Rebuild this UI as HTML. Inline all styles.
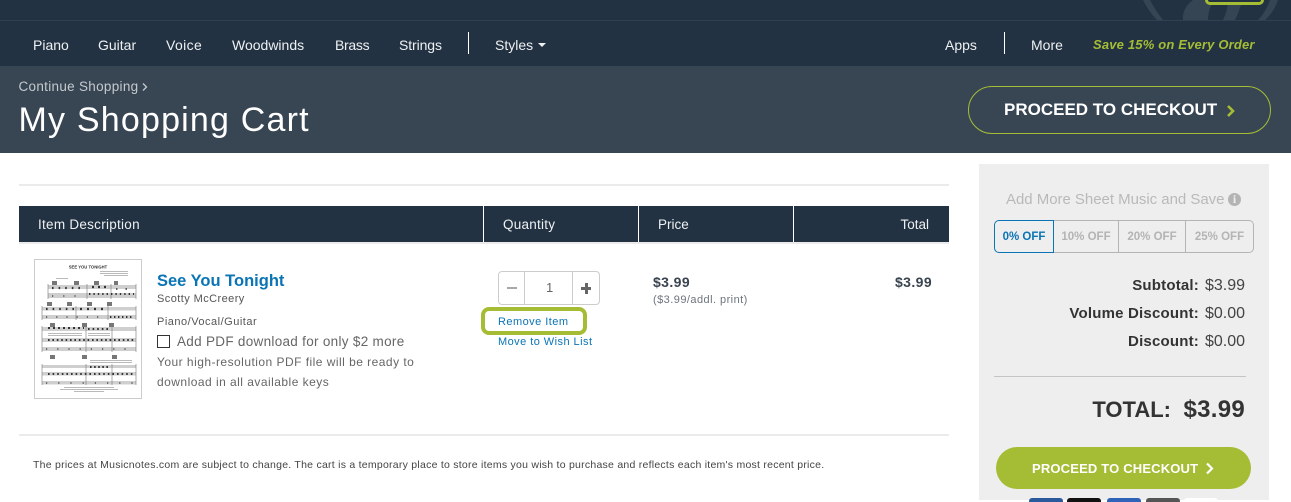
<!DOCTYPE html>
<html><head><meta charset="utf-8"><title>My Shopping Cart</title>
<style>
html,body{margin:0;padding:0;background:#fff}
body{position:relative;width:1291px;height:500px;overflow:hidden;font-family:"Liberation Sans",sans-serif;color:#333}
.a{position:absolute}
.t{position:absolute;white-space:nowrap;line-height:20px}
.n{font-size:14px;top:34.5px;color:#eef0f2}
.h{color:#eef0f2;font-size:13.5px;top:215px}
.b{font-weight:bold;color:#333;font-size:15px;letter-spacing:.2px}
.v{font-size:16px;color:#444}
.l{color:#0b74b5}
.off{position:absolute;top:220px;height:33px;line-height:33px;text-align:center;font-size:11.5px;font-weight:bold;color:#b4b4b4;box-sizing:border-box}
</style></head><body>
<div class="a" style="left:0;top:0;width:1291px;height:66px;background:#223242"></div>
<div class="a" style="left:0;top:20px;width:1291px;height:1px;background:#2f4052"></div>
<svg class="a" style="left:1120px;top:0" width="171" height="20" viewBox="0 0 171 20">
<path d="M23 0 Q29 12 37 20 L43 20 Q35 10 30 0Z" fill="#364553"/>
<path d="M73 0 Q62 8 63 20 L88 20 Q88 8 95 0Z" fill="#364553"/>
<path d="M108 0 Q108 10 103 20 L115 20 Q120 10 122 0Z" fill="#364553"/>
<path d="M150 0 Q146 12 138 20 L145 20 Q154 12 158 0Z" fill="#364553"/>
</svg>
<div class="a" style="left:1205px;top:-9px;width:53px;height:8px;border:3px solid #a5bd35;border-radius:5px;background:#223242"></div>
<span class="t n" style="left:33px">Piano</span>
<span class="t n" style="left:98px">Guitar</span>
<span class="t n" style="left:166px;letter-spacing:.4px">Voice</span>
<span class="t n" style="left:232px">Woodwinds</span>
<span class="t n" style="left:335px;letter-spacing:-.3px">Brass</span>
<span class="t n" style="left:399px;letter-spacing:-.1px">Strings</span>
<div class="a" style="left:468px;top:32px;width:1px;height:22px;background:#fff"></div>
<span class="t n" style="left:495px">Styles</span>
<div class="a" style="left:538px;top:43px;border-left:4px solid transparent;border-right:4px solid transparent;border-top:4px solid #eef0f2"></div>
<span class="t n" style="left:945px">Apps</span>
<div class="a" style="left:1004px;top:32px;width:1px;height:22px;background:#fff"></div>
<span class="t n" style="left:1031px">More</span>
<span class="t" style="left:1093px;top:34.5px;font-size:13px;font-weight:bold;font-style:italic;color:#a5bd35;letter-spacing:.18px">Save 15% on Every Order</span>

<div class="a" style="left:0;top:66px;width:1291px;height:87px;background:#384654"></div>
<span class="t" style="left:18.5px;top:77px;font-size:13.5px;color:#c4c9ce;letter-spacing:.3px">Continue Shopping</span>
<svg class="a" style="left:141px;top:82px" width="8" height="10"><path d="M2 1.5 L5.5 5 L2 8.5" fill="none" stroke="#c4c9ce" stroke-width="1.3"/></svg>
<span class="t" style="left:18.5px;top:110px;font-size:34px;color:#fff;letter-spacing:1.2px">My Shopping Cart</span>
<div class="a" style="left:968px;top:86px;width:301px;height:46px;border:1px solid #a5bd35;border-radius:24px"></div>
<span class="t" style="left:1004px;top:100px;font-size:17px;font-weight:bold;color:#fff">PROCEED TO CHECKOUT</span>
<svg class="a" style="left:1226px;top:104px" width="10" height="14"><path d="M2 2 L7 7 L2 12" fill="none" stroke="#a5bd35" stroke-width="2.6"/></svg>

<div class="a" style="left:19px;top:184px;width:930px;height:2px;background:#ebebeb"></div>
<div class="a" style="left:19px;top:206px;width:930px;height:36px;background:#223242"></div>
<div class="a" style="left:19px;top:242px;width:930px;height:2px;background:#ebebeb"></div>
<div class="a" style="left:483px;top:206px;width:1px;height:36px;background:#fff"></div>
<div class="a" style="left:638px;top:206px;width:1px;height:36px;background:#fff"></div>
<div class="a" style="left:793px;top:206px;width:1px;height:36px;background:#fff"></div>
<span class="t h" style="left:38px;letter-spacing:.27px">Item Description</span>
<span class="t h" style="left:503px;letter-spacing:.25px">Quantity</span>
<span class="t h" style="left:658px">Price</span>
<span class="t h" style="right:362px">Total</span>

<svg class="a" style="left:34px;top:259px" width="108" height="140" viewBox="0 0 108 140">
<rect x=".5" y=".5" width="107" height="139" fill="#fff" stroke="#ccc"/>
<text x="54" y="9.5" font-size="4.2" font-weight="bold" text-anchor="middle" fill="#333" font-family="Liberation Sans">SEE YOU TONIGHT</text>
<g fill="#aaa"><rect x="66" y="12" width="28" height=".8"/><rect x="66" y="14" width="28" height=".8"/><rect x="70" y="16" width="24" height=".8"/><rect x="22" y="19" width="12" height=".8"/></g>
<g fill="#cfcfcf">
<rect x="14" y="26" width="88" height="4"/><rect x="14" y="34" width="88" height="5"/>
<rect x="8" y="48" width="94" height="3.5"/><rect x="8" y="56" width="94" height="4"/>
<rect x="8" y="68" width="94" height="4"/><rect x="8" y="79" width="94" height="4"/><rect x="8" y="88" width="94" height="4"/>
<rect x="8" y="106" width="94" height="3"/><rect x="8" y="113" width="94" height="3.5"/><rect x="8" y="122" width="94" height="3.5"/>
</g>
<g stroke="#777" stroke-width=".6" fill="none">
<path d="M14 25V40M102 25V40M8 47V61M102 47V61M8 67V93M102 67V93M8 105V126M102 105V126"/>
<path d="M53 25V40M77 25V40M42 47V61M74 47V61M52 67V93M78 67V93M52 105V126M78 105V126"/>
</g>
<g fill="none" stroke="#333">
<path d="M18 29H50" stroke-width="2.2" stroke-dasharray="1.6 5"/>
<path d="M58 28H76" stroke-width="2.2" stroke-dasharray="2 4"/>
<path d="M82 30H100" stroke-width="1.5" stroke-dasharray="1.5 8"/>
<path d="M55 35H100" stroke-width="2" stroke-dasharray="1.4 3"/>
<path d="M18 37H50" stroke-width="1.2" stroke-dasharray="1.2 10"/>
<path d="M12 50H40" stroke-width="2.2" stroke-dasharray="1.6 5"/>
<path d="M46 50H72" stroke-width="2.2" stroke-dasharray="2 5"/>
<path d="M76 58H100" stroke-width="2" stroke-dasharray="1.4 2.6"/>
<path d="M12 58H72" stroke-width="1.2" stroke-dasharray="1.2 9"/>
<path d="M14 69H50" stroke-width="2" stroke-dasharray="2 3"/>
<path d="M54 70H76" stroke-width="2" stroke-dasharray="1.6 3"/>
<path d="M14 81H100" stroke-width="2" stroke-dasharray="1.6 2.8"/>
<path d="M12 90H100" stroke-width="1.2" stroke-dasharray="1.2 10"/>
<path d="M56 108H76" stroke-width="2" stroke-dasharray="1.6 2.5"/>
<path d="M14 115H100" stroke-width="2" stroke-dasharray="1.6 3"/>
<path d="M12 124H100" stroke-width="1.2" stroke-dasharray="1.2 11"/>
</g>
<path d="M18 22h5v4h-5zM40 22h5v4h-5zM60 22h5v4h-5zM80 22h4v4h-4zM13 43h5v4h-5zM33 43h5v4h-5zM53 43h5v4h-5zM73 43h5v4h-5zM16 64h5v4h-5zM48 64h5v4h-5zM75 64h5v4h-5zM16 96h5v4h-5zM48 96h5v4h-5zM78 96h5v4h-5z" fill="#777"/>
<g fill="#aaa"><rect x="14" y="74" width="34" height=".8"/><rect x="14" y="76" width="34" height=".8"/><rect x="54" y="74" width="22" height=".8"/><rect x="54" y="76" width="22" height=".8"/><rect x="56" y="101" width="42" height=".8"/><rect x="56" y="103" width="42" height=".8"/><rect x="30" y="128" width="50" height=".8"/><rect x="26" y="130" width="58" height=".8"/><rect x="40" y="132" width="30" height=".8"/></g>
</svg>

<span class="t" style="left:157px;top:271px;font-size:16.5px;font-weight:bold;color:#0b74b5">See You Tonight</span>
<span class="t" style="left:157px;top:288.5px;font-size:11px;color:#555;letter-spacing:.43px">Scotty McCreery</span>
<span class="t" style="left:157px;top:311.5px;font-size:11px;color:#555;letter-spacing:.5px">Piano/Vocal/Guitar</span>
<div class="a" style="left:157px;top:335px;width:11px;height:11px;border:1px solid #333;background:#fff"></div>
<span class="t" style="left:177px;top:332px;font-size:13.5px;color:#666;letter-spacing:.3px">Add PDF download for only $2 more</span>
<span class="t" style="left:157px;top:352px;font-size:12px;color:#666;letter-spacing:.47px">Your high-resolution PDF file will be ready to</span>
<span class="t" style="left:157px;top:372px;font-size:12px;color:#666;letter-spacing:.47px">download in all available keys</span>

<div class="a" style="left:498px;top:271px;width:100px;height:32px;border:1px solid #ccc;border-radius:4px;background:#fff"></div>
<div class="a" style="left:524px;top:272px;width:1px;height:32px;background:#ccc"></div>
<div class="a" style="left:572px;top:272px;width:1px;height:32px;background:#ccc"></div>
<div class="a" style="left:507px;top:287px;width:10px;height:2px;background:#a8a8a8"></div>
<div class="a" style="left:581px;top:287px;width:10px;height:3px;background:#666"></div>
<div class="a" style="left:585px;top:283px;width:3px;height:11px;background:#666"></div>
<span class="t" style="left:546px;top:278px;font-size:13px;color:#666">1</span>
<div class="a" style="left:480.5px;top:307px;width:98px;height:19.5px;border:4.5px solid #a5bd35;border-radius:8px"></div>
<span class="t l" style="left:498px;top:312px;font-size:11px;letter-spacing:.46px">Remove Item</span>
<span class="t l" style="left:498px;top:332px;font-size:11px;letter-spacing:.45px">Move to Wish List</span>
<span class="t" style="left:653px;top:271.5px;font-size:14px;font-weight:bold;color:#3a4450;letter-spacing:.4px">$3.99</span>
<span class="t" style="left:653px;top:290px;font-size:11px;color:#6c747c;letter-spacing:.45px">($3.99/addl. print)</span>
<span class="t" style="left:895px;top:271.5px;font-size:14px;font-weight:bold;color:#3a4450;letter-spacing:.4px">$3.99</span>

<div class="a" style="left:19px;top:434px;width:930px;height:2px;background:#ebebeb"></div>
<span class="t" style="left:33px;top:455px;font-size:10.5px;color:#444;letter-spacing:.25px">The prices at Musicnotes.com are subject to change. The cart is a temporary place to store items you wish to purchase and reflects each item's most recent price.</span>

<div class="a" style="left:979px;top:164px;width:290px;height:336px;background:#eee"></div>
<span class="t" style="left:1006px;top:189.5px;font-size:15px;color:#b9b9b9;letter-spacing:-.03px">Add More Sheet Music and Save</span>
<div class="a" style="left:1228px;top:193px;width:13px;height:13px;border-radius:50%;background:#b4b4b4;color:#eee;font:bold 12px/13px 'Liberation Serif',serif;text-align:center">i</div>
<div class="off" style="left:994px;width:60px;border:1px solid #0b74b5;border-radius:5px 0 0 5px;color:#0b74b5;line-height:32px">0% OFF</div>
<div class="off" style="left:1054px;width:65px;border:1px solid #b4b4b4;border-left:0;line-height:32px">10% OFF</div>
<div class="off" style="left:1119px;width:67px;border:1px solid #b4b4b4;border-left:0;line-height:32px">20% OFF</div>
<div class="off" style="left:1186px;width:68px;border:1px solid #b4b4b4;border-left:0;border-radius:0 5px 5px 0;line-height:32px">25% OFF</div>

<span class="t b" style="right:92px;top:275.5px">Subtotal:</span>
<span class="t v" style="right:46px;top:275.5px">$3.99</span>
<span class="t b" style="right:92px;top:303.5px">Volume Discount:</span>
<span class="t v" style="right:46px;top:303.5px">$0.00</span>
<span class="t b" style="right:92px;top:331.5px">Discount:</span>
<span class="t v" style="right:46px;top:331.5px">$0.00</span>
<div class="a" style="left:994px;top:376px;width:252px;height:1px;background:#c4c4c4"></div>
<span class="t" style="right:120px;top:400px;font-size:22px;font-weight:bold;color:#333">TOTAL:</span>
<span class="t" style="right:46px;top:400px;font-size:24px;font-weight:bold;color:#333;letter-spacing:.3px">$3.99</span>
<div class="a" style="left:996px;top:447px;width:255px;height:42px;background:#a5bd35;border-radius:21px"></div>
<span class="t" style="left:1032px;top:459px;font-size:13px;font-weight:bold;color:#fff;letter-spacing:.17px">PROCEED TO CHECKOUT</span>
<svg class="a" style="left:1205px;top:462px" width="10" height="13"><path d="M2 1.5 L7 6.5 L2 11.5" fill="none" stroke="#fff" stroke-width="2.2"/></svg>
<div class="a" style="left:1029px;top:498px;width:34px;height:4px;background:#2a5a9c;border-radius:3px 3px 0 0"></div>
<div class="a" style="left:1067px;top:498px;width:34px;height:4px;background:#111;border-radius:3px 3px 0 0"></div>
<div class="a" style="left:1107px;top:498px;width:34px;height:4px;background:#2e63b8;border-radius:3px 3px 0 0"></div>
<div class="a" style="left:1146px;top:498px;width:34px;height:4px;background:#555;border-radius:3px 3px 0 0"></div>
<div class="a" style="left:1184px;top:498px;width:34px;height:4px;background:#fff;border-radius:3px 3px 0 0"></div>
</body></html>
